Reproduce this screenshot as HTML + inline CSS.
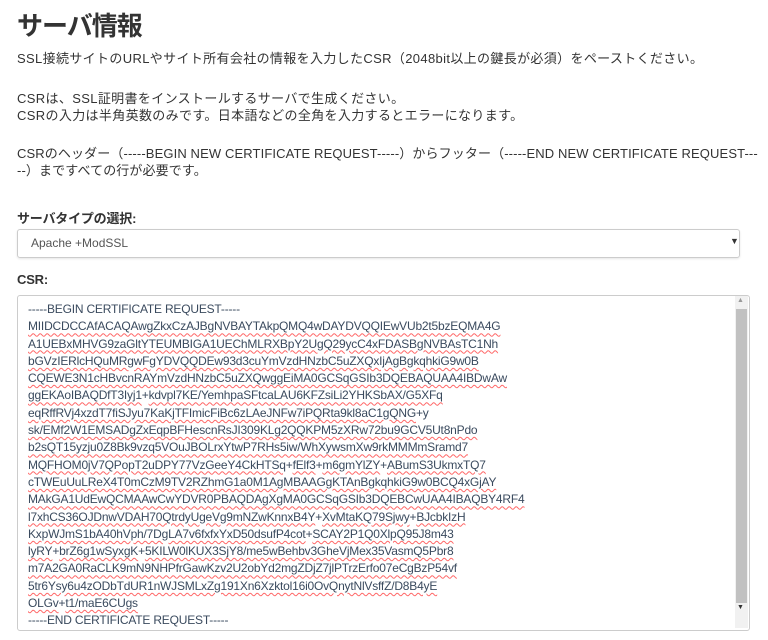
<!DOCTYPE html>
<html><head><meta charset="utf-8"><style>
body{margin:0;width:768px;height:640px;overflow:hidden;background:#fff;font-family:"Liberation Sans","Noto Sans CJK JP",sans-serif;color:#333;}
.a{position:absolute;white-space:nowrap;}
h1{position:absolute;left:17px;top:6px;margin:0;font-size:26px;font-weight:bold;color:#333;letter-spacing:-1px;}
.p{font-size:13px;letter-spacing:0.35px;color:#333;}
.lb{font-size:13px;font-weight:bold;letter-spacing:-0.2px;}
.sel{position:absolute;left:17px;top:229px;width:721px;height:27px;border:1px solid #ccc;border-radius:3px;box-shadow:0 1px 2px rgba(0,0,0,.1);}
.ta{position:absolute;left:17px;top:295px;width:731px;height:334px;border:1px solid #ccc;border-radius:3px;}
.sb{position:absolute;left:735px;top:296px;width:13px;height:332px;background:#f1f1f1;}
.th{position:absolute;left:736px;top:309px;width:11px;height:294px;background:#c1c1c1;}
.code{position:absolute;left:28px;top:301px;font-size:12px;line-height:17.3px;color:#3a4a5e;letter-spacing:-0.2px;}
.code u{text-decoration:underline wavy #f66;text-decoration-thickness:1px;text-underline-offset:2px;}
</style></head><body>
<h1>サーバ情報</h1>
<div class="a p" style="left:17px;top:48px">SSL接続サイトのURLやサイト所有会社の情報を入力したCSR（2048bit以上の鍵長が必須）をペーストください。</div>
<div class="a p" style="left:17px;top:88px">CSRは、SSL証明書をインストールするサーバで生成ください。</div>
<div class="a p" style="left:17px;top:105px">CSRの入力は半角英数のみです。日本語などの全角を入力するとエラーになります。</div>
<div class="a p" style="left:17px;top:143px;letter-spacing:0.12px">CSRのヘッダー（-----BEGIN NEW CERTIFICATE REQUEST-----）からフッター（-----END NEW CERTIFICATE REQUEST---</div>
<div class="a p" style="left:17px;top:160px;letter-spacing:0.12px">--）まですべての行が必要です。</div>
<div class="a lb" style="left:17px;top:208px">サーバタイプの選択:</div>
<div class="sel"></div>
<div class="a p" style="left:31px;top:236px;color:#555;font-size:12px;letter-spacing:0">Apache +ModSSL</div>
<div class="a" style="left:730px;top:236px;font-size:9px;color:#333">▼</div>
<div class="a lb" style="left:17px;top:272px">CSR:</div>
<div class="ta"></div>
<div class="sb"></div><div class="th"></div>
<div class="a" style="left:737px;top:297px;font-size:7px;color:#999">▲</div>
<div class="a" style="left:737px;top:604px;font-size:7px;color:#333">▼</div>
<div class="code">-----BEGIN CERTIFICATE REQUEST-----<br>
<u>MIIDCDCCAfACAQAwgZkxCzAJBgNVBAYTAkpQMQ4wDAYDVQQIEwVUb2t5bzEQMA4G</u><br>
<u>A1UEBxMHVG9zaGltYTEUMBIGA1UEChMLRXBpY2UgQ29ycC4xFDASBgNVBAsTC1Nh</u><br>
<u>bGVzIERlcHQuMRgwFgYDVQQDEw93d3cuYmVzdHNzbC5uZXQxIjAgBgkqhkiG9w0B</u><br>
<u>CQEWE3N1cHBvcnRAYmVzdHNzbC5uZXQwggEiMA0GCSqGSIb3DQEBAQUAA4IBDwAw</u><br>
<u>ggEKAoIBAQDfT3Iyj1</u>+<u>kdvpl7KE/YemhpaSFtcaLAU6KFZsiLi2YHKSbAX/G5XFq</u><br>
<u>eqRffRVj4xzdT7fiSJyu7KaKjTFImicFiBc6zLAeJNFw7iPQRta9kl8aC1gQNG</u>+y<br>
<u>sk/EMf2W1EMSADgZxEqpBFHescnRsJI309KLg2QQKPM5zXRw72bu9GCV5Ut8nPdo</u><br>
<u>b2sQT15yzju0Z8Bk9vzq5VOuJBOLrxYtwP7RHs5iw/WhXywsmXw9rkMMMmSramd7</u><br>
<u>MQFHOM0jV7QPopT2uDPY77VzGeeY4CkHTSq</u>+<u>fElf3</u>+<u>m6gmYlZY</u>+<u>ABumS3UkmxTQ7</u><br>
<u>cTWEuUuLReX4T0mCzM9TV2RZhmG1a0M1AgMBAAGgKTAnBgkqhkiG9w0BCQ4xGjAY</u><br>
<u>MAkGA1UdEwQCMAAwCwYDVR0PBAQDAgXgMA0GCSqGSIb3DQEBCwUAA4IBAQBY4RF4</u><br>
<u>l7xhCS36OJDnwVDAH70QtrdyUgeVg9mNZwKnnxB4Y</u>+<u>XvMtaKQ79Sjwy</u>+<u>BJcbkIzH</u><br>
<u>KxpWJmS1bA40hVph/7DgLA7v6fxfxYxD50dsufP4cot</u>+<u>SCAY2P1Q0XlpQ95J8m43</u><br>
<u>lyRY</u>+<u>brZ6g1wSyxgK</u>+<u>5KILW0lKUX3SjY8/me5wBehbv3GheVjMex35VasmQ5Pbr8</u><br>
<u>m7A2GA0RaCLK9mN9NHPfrGawKzv2U2obYd2mgZDjZ7jlPTrzErfo07eCgBzP54vf</u><br>
<u>5tr6Ysy6u4zODbTdUR1nWJSMLxZg191Xn6Xzktol16i0OvQnytNlVsffZ/D8B4yE</u><br>
<u>OLGv</u>+<u>t1/maE6CUgs</u><br>
-----END CERTIFICATE REQUEST-----</div>
</body></html>
